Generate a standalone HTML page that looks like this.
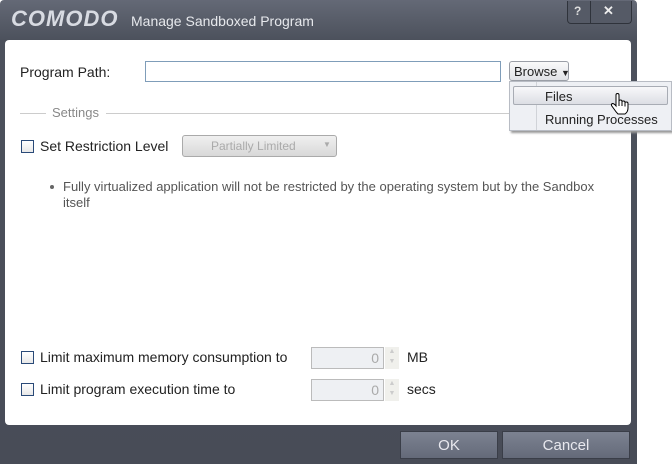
<!DOCTYPE html><html><head><style>
body{margin:0;width:672px;height:464px;background:#fff;font-family:"Liberation Sans",sans-serif;font-size:14px;position:relative;overflow:hidden}
.win{position:absolute;left:0;top:0;width:637px;height:464px;background:linear-gradient(#646976,#4c515c 40px,#484c57);border-radius:4px 4px 0 0}
.panel{position:absolute;left:5px;top:40px;width:626px;height:385px;background:#fff;border-radius:4px}
.a{position:absolute}
.cb{position:absolute;width:11px;height:11px;border:1px solid #2a4a78;background:linear-gradient(#fff,#e8e8e8)}
.t{position:absolute;color:#222;white-space:nowrap}
.spin{position:absolute;width:73px;height:22px;border:1px solid #bbb;background:#eef0f3;color:#aaa;text-align:right;box-sizing:border-box;padding-right:4px;line-height:20px}
.arr{position:absolute;width:14px;height:22px;background:#f0f0ec;color:#ccc;font-size:7px;line-height:10px;text-align:center}
.btn{position:absolute;top:431px;height:28px;background:linear-gradient(#7c8291,#646a79);border:1px solid #3a3e48;color:#e8e8ee;font-size:15px;text-align:center;line-height:28px;box-sizing:border-box}
</style></head><body>
<div class="win"></div>
<div class="t" style="left:11px;top:6px;font-size:22px;font-weight:bold;font-style:italic;color:#d8dbe2;letter-spacing:1px">COMODO</div>
<div class="t" style="left:131px;top:13px;font-size:14px;color:#e6e8ec">Manage Sandboxed Program</div>
<div class="a" style="left:567px;top:1px;width:63px;height:22px;border:1px solid #2f333b;border-top:none;border-radius:0 0 4px 4px;background:#555a66"></div>
<div class="a" style="left:590px;top:1px;width:1px;height:22px;background:#2f333b"></div>
<div class="t" style="left:574px;top:4px;color:#ddd;font-weight:bold;font-size:12px">?</div>
<div class="t" style="left:603px;top:3px;color:#eee;font-weight:bold;font-size:13px">✕</div>
<div class="panel"></div>
<div class="t" style="left:20px;top:64px">Program Path:</div>
<div class="a" style="left:145px;top:61px;width:354px;height:19px;border:1px solid #7f9db9"></div>
<div class="a" style="left:509px;top:61px;width:60px;height:20px;border:1px solid #9a9ea6;border-radius:3px;background:linear-gradient(#fafafa,#e0e2e6);box-sizing:border-box"></div>
<div class="t" style="left:514px;top:64px;font-size:13px">Browse <span style="font-size:9px">▼</span></div>
<div class="a" style="left:20px;top:113px;width:26px;height:1px;background:#ccc"></div>
<div class="t" style="left:52px;top:105px;color:#888;font-size:13px">Settings</div>
<div class="a" style="left:106px;top:113px;width:405px;height:1px;background:#ccc"></div>
<div class="cb" style="left:21px;top:140px"></div>
<div class="t" style="left:40px;top:138px;font-size:14px">Set Restriction Level</div>
<div class="a" style="left:182px;top:135px;width:155px;height:22px;border:1px solid #aaa;border-radius:3px;background:linear-gradient(#f0f0f0,#d8d8d8);box-sizing:border-box"></div>
<div class="t" style="left:211px;top:139px;color:#aaa;font-size:12px">Partially Limited</div>
<div class="t" style="left:323px;top:140px;color:#aaa;font-size:8px">▼</div>
<div class="a" style="left:50px;top:185px;width:4px;height:4px;border-radius:50%;background:#666"></div>
<div class="t" style="left:63px;top:179px;color:#555;font-size:13px">Fully virtualized application will not be restricted by the operating system but by the Sandbox</div>
<div class="t" style="left:63px;top:195px;color:#555;font-size:13px">itself</div>
<div class="cb" style="left:21px;top:351px"></div>
<div class="t" style="left:40px;top:349px">Limit maximum memory consumption to</div>
<div class="spin" style="left:311px;top:347px">0</div><div class="arr" style="left:385px;top:347px">▲<br>▼</div>
<div class="t" style="left:407px;top:349px">MB</div>
<div class="cb" style="left:21px;top:383px"></div>
<div class="t" style="left:40px;top:381px">Limit program execution time to</div>
<div class="spin" style="left:311px;top:379px">0</div><div class="arr" style="left:385px;top:379px">▲<br>▼</div>
<div class="t" style="left:407px;top:381px">secs</div>
<div class="btn" style="left:400px;width:98px">OK</div>
<div class="btn" style="left:502px;width:128px">Cancel</div>
<div class="a" style="left:509px;top:81px;width:163px;height:50px;background:#eef0f4;border:1px solid #b8bcc4;box-shadow:2px 2px 2px #999;box-sizing:border-box"></div>
<div class="a" style="left:536px;top:82px;width:1px;height:48px;background:#d0d3d8"></div>
<div class="a" style="left:513px;top:86px;width:155px;height:19px;border:1px solid #a8acb4;border-radius:2px;background:linear-gradient(#f8f8fa,#dcdee4);box-sizing:border-box"></div>
<div class="t" style="left:545px;top:89px;font-size:13px">Files</div>
<div class="t" style="left:545px;top:112px;font-size:13px">Running Processes</div>
<svg class="a" style="left:610px;top:93px" width="20" height="22" viewBox="0 0 20 22"><path d="M6 2 Q6 0.5 7.5 0.5 Q9 0.5 9 2 V8 Q9 7 10.5 7 Q12 7 12 8.5 Q12 8 13.5 8 Q15 8 15 9.5 Q15 9 16.5 9 Q18 9 18 10.5 V15 Q18 19 15 21 H8 Q6 19 4 16 L1.5 12.5 Q1 11 2.5 10.5 Q4 10.5 6 13 Z" fill="#fff" stroke="#000" stroke-width="1"/><path d="M9 8v5M12 8.5v4.5M15 9.5v4" stroke="#000" stroke-width="1"/></svg>
</body></html>
